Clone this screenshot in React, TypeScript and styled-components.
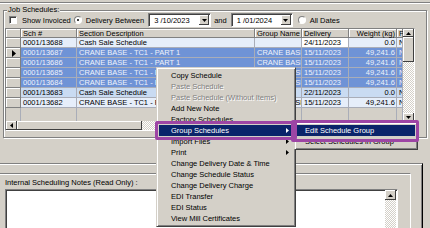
import React from 'react';
import styled, { createGlobalStyle } from 'styled-components';

type Tone = 'light' | 'mid' | 'sel';
type Dir = 'up' | 'down' | 'left' | 'right';

// win classic palette
const FACE = '#d4d0c8';
const SHADOW = '#808080';
const DARK = '#404040';
const HILITE = '#ffffff';
const NAVY = '#0a246a';
const GRID = '#a9adb8';
const PURPLE = '#9d45a5';

const toneBg: Record<Tone, string> = { light: '#e6eefa', mid: '#c9dbf2', sel: '#6f93d6' };
const checker = `repeating-conic-gradient(${HILITE} 0 25%, ${FACE} 0 50%) 0 0 / 2px 2px`;
const raised = `inset -1px -1px 0 ${DARK}, inset 1px 1px 0 ${HILITE}`;

const GlobalStyle = createGlobalStyle`
  html, body {
    margin: 0;
    padding: 0;
    background: ${FACE};
    overflow: hidden;
  }
`;

const Window = styled.div`
  position: relative;
  width: 430px;
  height: 228px;
  overflow: hidden;
  background: ${FACE};
  font-family: 'Liberation Sans', Arial, sans-serif;
  font-size: 7.5px;
  line-height: 9px;
  color: #000;
`;

const TopStrip = styled.div`
  height: 2px;
  border-bottom: 1px solid ${SHADOW};
  box-shadow: 0 1px 0 ${HILITE};
`;

const Group = styled.div`
  position: relative;
  box-sizing: border-box;
  height: 128px;
  margin: 7px 3px 0 3px;
  padding: 2px 0 0 1px;
  border: 1px solid ${SHADOW};
  box-shadow: inset 1px 1px 0 ${HILITE}, 1px 1px 0 ${HILITE};
`;

const Legend = styled.span`
  position: absolute;
  top: -6px;
  left: 3px;
  padding: 0 1px;
  background: ${FACE};
`;

const FilterRow = styled.div`
  display: flex;
  align-items: center;
  height: 14px;
  padding-left: 4px;
  white-space: nowrap;
`;

const Caption = styled.span<{ $ml: number }>`
  margin-left: ${p => p.$ml}px;
`;

const Check = styled.span`
  box-sizing: border-box;
  width: 8px;
  height: 8px;
  background: #fff;
  border: 1px solid;
  border-color: ${SHADOW} ${HILITE} ${HILITE} ${SHADOW};
  box-shadow: inset 1px 1px 0 ${DARK};
`;

const Radio = styled.span<{ $ml: number; $on?: boolean }>`
  box-sizing: border-box;
  display: flex;
  align-items: center;
  justify-content: center;
  width: 8px;
  height: 8px;
  margin-left: ${p => p.$ml}px;
  border-radius: 50%;
  background: #fff;
  border: 1px solid;
  border-color: ${SHADOW} ${HILITE} ${HILITE} ${SHADOW};

  &::after {
    content: '';
    width: 2px;
    height: 2px;
    border-radius: 50%;
    background: ${p => (p.$on ? '#000' : 'transparent')};
  }
`;

const Combo = styled.div<{ $ml: number; $w: number }>`
  box-sizing: border-box;
  display: flex;
  align-items: center;
  width: ${p => p.$w}px;
  height: 14px;
  margin-left: ${p => p.$ml}px;
  padding: 1px 1px 1px 2px;
  background: #fff;
  border: 1px solid;
  border-color: ${SHADOW} ${HILITE} ${HILITE} ${SHADOW};
  box-shadow: inset 1px 1px 0 ${DARK};
`;

const ComboText = styled.span`
  flex: 1;
  padding-left: 3px;
`;

const DropBtn = styled.span`
  display: flex;
  align-items: center;
  justify-content: center;
  width: 10px;
  height: 10px;
  background: ${FACE};
  box-shadow: ${raised};
`;

const GridFrame = styled.div`
  box-sizing: border-box;
  display: grid;
  grid-template-columns: 397px 11px;
  grid-template-rows: 92px 9px;
  width: 410px;
  height: 103px;
  margin-top: 1px;
  border: 1px solid;
  border-color: ${SHADOW} ${HILITE} ${HILITE} ${SHADOW};
`;

const Sheet = styled.div<{ $cols: string }>`
  display: grid;
  grid-template-columns: ${p => p.$cols};
  grid-template-rows: 9px repeat(7, 10px) 1fr;
  background: ${FACE};
  overflow: hidden;
`;

const HeadCell = styled.div<{ $right?: boolean }>`
  box-sizing: border-box;
  padding: 0 ${p => (p.$right ? '2px' : '1px')} 0 2px;
  line-height: 9px;
  white-space: nowrap;
  overflow: hidden;
  text-align: ${p => (p.$right ? 'right' : 'left')};
  box-shadow: inset -1px -1px 0 ${SHADOW}, inset 1px 1px 0 ${HILITE};
`;

const RowHead = styled.div`
  display: flex;
  align-items: center;
  justify-content: center;
  box-shadow: inset -1px -1px 0 ${SHADOW}, inset 1px 1px 0 ${HILITE};
`;

const Cell = styled.div<{ $tone: Tone; $right?: boolean; $focus?: boolean }>`
  box-sizing: border-box;
  padding: 0 ${p => (p.$right ? '1px' : '2px')} 0 2px;
  line-height: 9px;
  white-space: nowrap;
  overflow: hidden;
  text-align: ${p => (p.$right ? 'right' : 'left')};
  border-right: 1px solid ${GRID};
  border-bottom: 1px solid ${GRID};
  background: ${p => (p.$focus ? '#fff' : toneBg[p.$tone])};
  color: ${p => (p.$tone === 'sel' ? '#eef2fb' : '#000')};
`;

const FillCell = styled.div`
  border-right: 1px solid ${GRID};
`;

const VScroll = styled.div`
  display: flex;
  flex-direction: column;
  background: ${checker};
`;

const HScroll = styled.div`
  display: flex;
  background: ${checker};
`;

const ScrollBtn = styled.div<{ $w: number; $h: number }>`
  display: flex;
  align-items: center;
  justify-content: center;
  flex: 0 0 auto;
  width: ${p => p.$w}px;
  height: ${p => p.$h}px;
  background: ${FACE};
  box-shadow: ${raised};
`;

const Track = styled.div`
  flex: 1;
`;

const ScrollCorner = styled.div`
  background: ${FACE};
`;

const Split = styled.div`
  height: 25px;
`;

const NotesOuter = styled.div`
  box-sizing: border-box;
  width: 423px;
  height: 65px;
  padding-top: 9px;
  border-top: 1px solid ${SHADOW};
  border-right: 1px solid #000;
  box-shadow: inset 0 1px 0 ${HILITE}, inset -1px 0 0 ${SHADOW};
`;

const NotesInner = styled.div`
  box-sizing: border-box;
  width: 411px;
  height: 60px;
  padding: 4px 0 0 5px;
  border-top: 1px solid ${SHADOW};
  border-right: 1px solid ${HILITE};
  box-shadow: inset 0 1px 0 ${HILITE};
`;

const Memo = styled.div`
  box-sizing: border-box;
  display: flex;
  width: 393px;
  height: 50px;
  margin-top: 2px;
  background: #fff;
  border: 1px solid;
  border-color: ${SHADOW} ${HILITE} ${HILITE} ${SHADOW};
  box-shadow: inset 1px 1px 0 ${DARK};
`;

const MemoScroll = styled.div`
  display: flex;
  flex-direction: column;
  width: 11px;
  margin: 0 1px 0 auto;
  background: ${checker};
`;

const Menu = styled.div<{ $x: number; $y: number; $w: number }>`
  position: absolute;
  left: ${p => p.$x}px;
  top: ${p => p.$y}px;
  box-sizing: border-box;
  width: ${p => p.$w}px;
  padding: 2px;
  background: ${FACE};
  border: 1px solid;
  border-color: ${FACE} ${DARK} ${DARK} ${FACE};
  box-shadow: inset 1px 1px 0 ${HILITE}, inset -1px -1px 0 ${SHADOW};
`;

const Item = styled.div<{ $indent: number; $active?: boolean; $disabled?: boolean }>`
  display: flex;
  align-items: center;
  height: 11px;
  padding: 0 4px 0 ${p => p.$indent}px;
  white-space: nowrap;
  background: ${p => (p.$active ? NAVY : 'transparent')};
  color: ${p => (p.$active ? '#fff' : p.$disabled ? SHADOW : '#000')};
  text-shadow: ${p => (p.$disabled ? `1px 1px 0 ${HILITE}` : 'none')};
`;

const ItemLabel = styled.span`
  flex: 1;
`;

const Callout = styled.div<{ $x: number; $y: number; $w: number; $h: number }>`
  position: absolute;
  left: ${p => p.$x}px;
  top: ${p => p.$y}px;
  box-sizing: border-box;
  width: ${p => p.$w}px;
  height: ${p => p.$h}px;
  border: 3px solid ${PURPLE};
  border-radius: 2px;
`;

const Glyph = styled.svg`
  display: block;
  flex-shrink: 0;
`;

const Tri = ({ dir, w, h, color = '#000' }: { dir: Dir; w: number; h: number; color?: string }) => {
  const pts = {
    up: `0,${h} ${w / 2},0 ${w},${h}`,
    down: `0,0 ${w},0 ${w / 2},${h}`,
    right: `0,0 ${w},${h / 2} 0,${h}`,
    left: `${w},0 0,${h / 2} ${w},${h}`,
  }[dir];
  return (
    <Glyph width={w} height={h} viewBox={`0 0 ${w} ${h}`}>
      <polygon points={pts} fill={color} />
    </Glyph>
  );
};

const columns = [
  { title: '', width: 15 },
  { title: 'Sch #', width: 56 },
  { title: 'Section Description', width: 178 },
  { title: 'Group Name', width: 47 },
  { title: 'Delivery', width: 47 },
  { title: 'Weight (kg)', width: 48, right: true },
  { title: 'F', width: 6 },
];

const crane = 'CRANE BASE - TC1 - PART 1';

const rows: {
  sch: string;
  desc: string;
  group: string;
  del: string;
  wt: string;
  tone: Tone;
  current?: boolean;
  focus?: boolean;
}[] = [
  { sch: '0001/13688', desc: 'Cash Sale Schedule', group: '', del: '24/11/2023', wt: '0.0', tone: 'light', focus: true },
  { sch: '0001/13687', desc: crane, group: 'CRANE BASE', del: '15/11/2023', wt: '49,241.6', tone: 'sel', current: true },
  { sch: '0001/13686', desc: crane, group: 'CRANE BASE', del: '15/11/2023', wt: '49,241.6', tone: 'sel' },
  { sch: '0001/13685', desc: crane, group: 'CRANE BASE', del: '15/11/2023', wt: '49,241.6', tone: 'sel' },
  { sch: '0001/13684', desc: crane, group: 'CRANE BASE', del: '15/11/2023', wt: '49,241.6', tone: 'sel' },
  { sch: '0001/13683', desc: 'Cash Sale Schedule', group: '', del: '22/11/2023', wt: '0.0', tone: 'mid' },
  { sch: '0001/13682', desc: crane, group: 'CRANE BASE', del: '15/11/2023', wt: '49,241.6', tone: 'light' },
];

const menuItems: { label: string; disabled?: boolean; sub?: boolean; active?: boolean }[] = [
  { label: 'Copy Schedule' },
  { label: 'Paste Schedule', disabled: true },
  { label: 'Paste Schedule (Without Items)', disabled: true },
  { label: 'Add New Note' },
  { label: 'Factory Schedules' },
  { label: 'Group Schedules', sub: true, active: true },
  { label: 'Import Files', sub: true },
  { label: 'Print', sub: true },
  { label: 'Change Delivery Date & Time' },
  { label: 'Change Schedule Status' },
  { label: 'Change Delivery Charge' },
  { label: 'EDI Transfer' },
  { label: 'EDI Status' },
  { label: 'View Mill Certificates' },
];

const subItems = [
  { label: 'Edit Schedule Group', active: true },
  { label: 'Select Schedules in Group' },
];

const DateCombo = ({ ml, w, value }: { ml: number; w: number; value: string }) => (
  <Combo $ml={ml} $w={w}>
    <ComboText>{value}</ComboText>
    <DropBtn>
      <Tri dir="down" w={5} h={3} />
    </DropBtn>
  </Combo>
);

export default function App() {
  return (
    <Window>
      <GlobalStyle />
      <TopStrip />

      <Group>
        <Legend>Job Schedules:</Legend>
        <FilterRow>
          <Check />
          <Caption $ml={5}>Show Invoiced</Caption>
          <Radio $ml={3} $on />
          <Caption $ml={4}>Delivery Between</Caption>
          <DateCombo ml={4} w={63} value="3 /10/2023" />
          <Caption $ml={3}>and</Caption>
          <DateCombo ml={4} w={62} value="1 /01/2024" />
          <Radio $ml={5} />
          <Caption $ml={4}>All Dates</Caption>
        </FilterRow>

        <GridFrame>
          <Sheet $cols={columns.map(c => `${c.width}px`).join(' ')}>
            {columns.map(c => (
              <HeadCell key={c.title || 'corner'} $right={c.right}>
                {c.title}
              </HeadCell>
            ))}
            {rows.map(r => (
              <React.Fragment key={r.sch}>
                <RowHead>{r.current && <Tri dir="right" w={4} h={7} />}</RowHead>
                <Cell $tone={r.tone}>{r.sch}</Cell>
                <Cell $tone={r.tone}>{r.desc}</Cell>
                <Cell $tone={r.tone}>{r.group}</Cell>
                <Cell $tone={r.tone} $focus={r.focus}>{r.del}</Cell>
                <Cell $tone={r.tone} $right>{r.wt}</Cell>
                <Cell $tone={r.tone}>N</Cell>
              </React.Fragment>
            ))}
            {columns.map(c => (
              <FillCell key={`fill-${c.title}`} />
            ))}
          </Sheet>

          <VScroll>
            <ScrollBtn $w={11} $h={8}>
              <Tri dir="up" w={5} h={3} />
            </ScrollBtn>
            <ScrollBtn $w={11} $h={25} />
            <Track />
            <ScrollBtn $w={11} $h={8}>
              <Tri dir="down" w={5} h={3} />
            </ScrollBtn>
          </VScroll>

          <HScroll>
            <ScrollBtn $w={11} $h={9}>
              <Tri dir="left" w={3} h={5} />
            </ScrollBtn>
            <ScrollBtn $w={125} $h={9} />
            <Track />
            <ScrollBtn $w={11} $h={9}>
              <Tri dir="right" w={3} h={5} />
            </ScrollBtn>
          </HScroll>
          <ScrollCorner />
        </GridFrame>
      </Group>

      <Split />

      <NotesOuter>
        <NotesInner>
          <div>Internal Scheduling Notes (Read Only) :</div>
          <Memo>
            <MemoScroll>
              <ScrollBtn $w={11} $h={10}>
                <Tri dir="up" w={5} h={3} />
              </ScrollBtn>
            </MemoScroll>
          </Memo>
        </NotesInner>
      </NotesOuter>

      <Menu $x={156} $y={67} $w={140}>
        {menuItems.map(m => (
          <Item key={m.label} $indent={12} $active={m.active} $disabled={m.disabled}>
            <ItemLabel>{m.label}</ItemLabel>
            {m.sub && <Tri dir="right" w={3} h={5} color={m.active ? '#fff' : '#000'} />}
          </Item>
        ))}
      </Menu>

      <Menu $x={294} $y={122} $w={124}>
        {subItems.map(m => (
          <Item key={m.label} $indent={8} $active={m.active}>
            <ItemLabel>{m.label}</ItemLabel>
          </Item>
        ))}
      </Menu>

      <Callout $x={155} $y={121} $w={142} $h={19} />
      <Callout $x={291} $y={120} $w={128} $h={22} />
    </Window>
  );
}
